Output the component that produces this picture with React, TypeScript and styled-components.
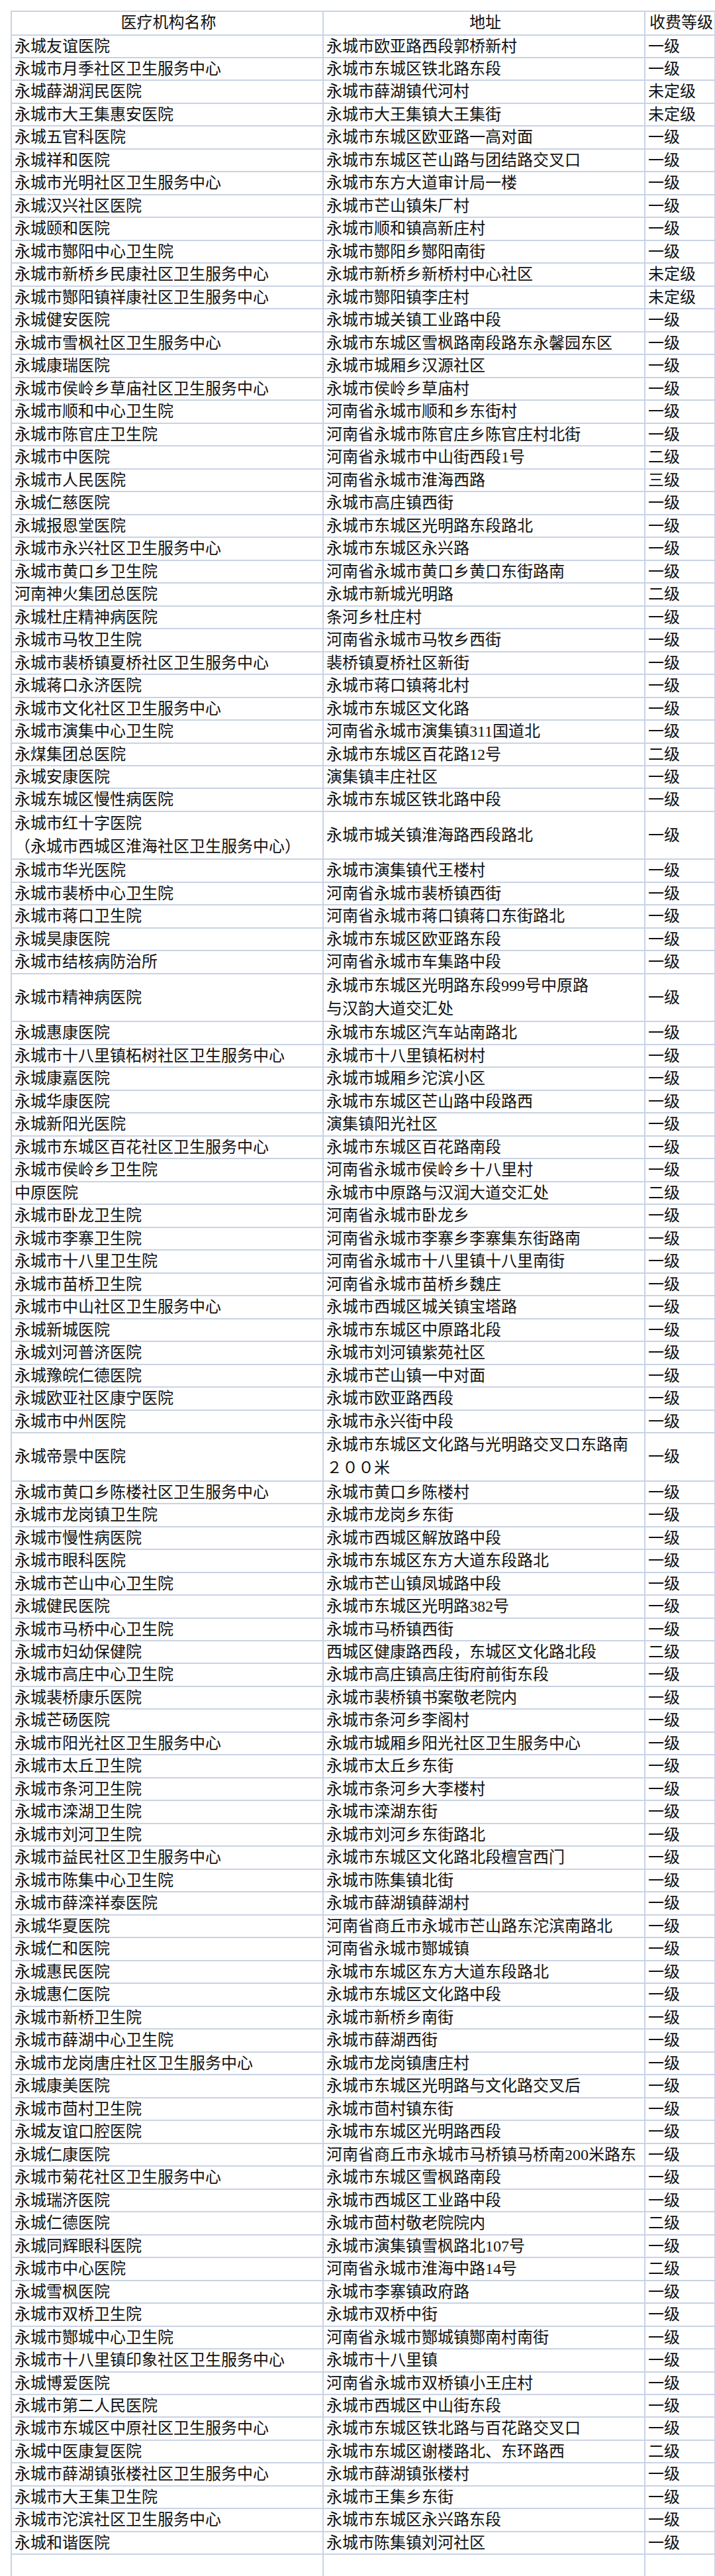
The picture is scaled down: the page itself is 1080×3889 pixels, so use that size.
import styled, { createGlobalStyle } from "styled-components";

const GlobalStyle = createGlobalStyle`
  html,
  body {
    margin: 0;
    padding: 0;
    background: #ffffff;
  }

  body {
    font-family: "Liberation Serif", "Noto Sans CJK SC", serif;
    color: #111111;
  }
`;

const Table = styled.table`
  margin: 16px 0 0 16px;
  width: 1063px;
  border-collapse: collapse;
  table-layout: fixed;
  font-size: 24px;
`;

const Col = styled.col<{ $w: number }>`
  width: ${({ $w }) => $w}px;
`;

const HeadCell = styled.th`
  border: 2px solid #c9d3e5;
  padding: 0 0 0 4px;
  line-height: 33.5px;
  font-weight: normal;
  text-align: center;
  white-space: nowrap;
  overflow: hidden;
`;

const Cell = styled.td<{ $tall?: boolean }>`
  border: 2px solid #c9d3e5;
  padding: 0 0 0 4px;
  line-height: ${({ $tall }) => ($tall ? "35.25px" : "32.48px")};
  text-align: left;
  vertical-align: middle;
  white-space: nowrap;
  overflow: hidden;
`;

type Clinic = [string, string, string];

// "\n" marks a hard line break inside a cell
const clinics: Clinic[] = [
  ["永城友谊医院", "永城市欧亚路西段郭桥新村", "一级"],
  ["永城市月季社区卫生服务中心", "永城市东城区铁北路东段", "一级"],
  ["永城薛湖润民医院", "永城市薛湖镇代河村", "未定级"],
  ["永城市大王集惠安医院", "永城市大王集镇大王集街", "未定级"],
  ["永城五官科医院", "永城市东城区欧亚路一高对面", "一级"],
  ["永城祥和医院", "永城市东城区芒山路与团结路交叉口", "一级"],
  ["永城市光明社区卫生服务中心", "永城市东方大道审计局一楼", "一级"],
  ["永城汉兴社区医院", "永城市芒山镇朱厂村", "一级"],
  ["永城颐和医院", "永城市顺和镇高新庄村", "一级"],
  ["永城市酂阳中心卫生院", "永城市酂阳乡酂阳南街", "一级"],
  ["永城市新桥乡民康社区卫生服务中心", "永城市新桥乡新桥村中心社区", "未定级"],
  ["永城市酂阳镇祥康社区卫生服务中心", "永城市酂阳镇李庄村", "未定级"],
  ["永城健安医院", "永城市城关镇工业路中段", "一级"],
  ["永城市雪枫社区卫生服务中心", "永城市东城区雪枫路南段路东永馨园东区", "一级"],
  ["永城康瑞医院", "永城市城厢乡汉源社区", "一级"],
  ["永城市侯岭乡草庙社区卫生服务中心", "永城市侯岭乡草庙村", "一级"],
  ["永城市顺和中心卫生院", "河南省永城市顺和乡东街村", "一级"],
  ["永城市陈官庄卫生院", "河南省永城市陈官庄乡陈官庄村北街", "一级"],
  ["永城市中医院", "河南省永城市中山街西段1号", "二级"],
  ["永城市人民医院", "河南省永城市淮海西路", "三级"],
  ["永城仁慈医院", "永城市高庄镇西街", "一级"],
  ["永城报恩堂医院", "永城市东城区光明路东段路北", "一级"],
  ["永城市永兴社区卫生服务中心", "永城市东城区永兴路", "一级"],
  ["永城市黄口乡卫生院", "河南省永城市黄口乡黄口东街路南", "一级"],
  ["河南神火集团总医院", "永城市新城光明路", "二级"],
  ["永城杜庄精神病医院", "条河乡杜庄村", "一级"],
  ["永城市马牧卫生院", "河南省永城市马牧乡西街", "一级"],
  ["永城市裴桥镇夏桥社区卫生服务中心", "裴桥镇夏桥社区新街", "一级"],
  ["永城蒋口永济医院", "永城市蒋口镇蒋北村", "一级"],
  ["永城市文化社区卫生服务中心", "永城市东城区文化路", "一级"],
  ["永城市演集中心卫生院", "河南省永城市演集镇311国道北", "一级"],
  ["永煤集团总医院", "永城市东城区百花路12号", "二级"],
  ["永城安康医院", "演集镇丰庄社区", "一级"],
  ["永城东城区慢性病医院", "永城市东城区铁北路中段", "一级"],
  ["永城市红十字医院\n（永城市西城区淮海社区卫生服务中心）", "永城市城关镇淮海路西段路北", "一级"],
  ["永城市华光医院", "永城市演集镇代王楼村", "一级"],
  ["永城市裴桥中心卫生院", "河南省永城市裴桥镇西街", "一级"],
  ["永城市蒋口卫生院", "河南省永城市蒋口镇蒋口东街路北", "一级"],
  ["永城昊康医院", "永城市东城区欧亚路东段", "一级"],
  ["永城市结核病防治所", "河南省永城市车集路中段", "一级"],
  ["永城市精神病医院", "永城市东城区光明路东段999号中原路\n与汉韵大道交汇处", "一级"],
  ["永城惠康医院", "永城市东城区汽车站南路北", "一级"],
  ["永城市十八里镇柘树社区卫生服务中心", "永城市十八里镇柘树村", "一级"],
  ["永城康嘉医院", "永城市城厢乡沱滨小区", "一级"],
  ["永城华康医院", "永城市东城区芒山路中段路西", "一级"],
  ["永城新阳光医院", "演集镇阳光社区", "一级"],
  ["永城市东城区百花社区卫生服务中心", "永城市东城区百花路南段", "一级"],
  ["永城市侯岭乡卫生院", "河南省永城市侯岭乡十八里村", "一级"],
  ["中原医院", "永城市中原路与汉润大道交汇处", "二级"],
  ["永城市卧龙卫生院", "河南省永城市卧龙乡", "一级"],
  ["永城市李寨卫生院", "河南省永城市李寨乡李寨集东街路南", "一级"],
  ["永城市十八里卫生院", "河南省永城市十八里镇十八里南街", "一级"],
  ["永城市苗桥卫生院", "河南省永城市苗桥乡魏庄", "一级"],
  ["永城市中山社区卫生服务中心", "永城市西城区城关镇宝塔路", "一级"],
  ["永城新城医院", "永城市东城区中原路北段", "一级"],
  ["永城刘河普济医院", "永城市刘河镇紫苑社区", "一级"],
  ["永城豫皖仁德医院", "永城市芒山镇一中对面", "一级"],
  ["永城欧亚社区康宁医院", "永城市欧亚路西段", "一级"],
  ["永城市中州医院", "永城市永兴街中段", "一级"],
  ["永城帝景中医院", "永城市东城区文化路与光明路交叉口东路南\n２００米", "一级"],
  ["永城市黄口乡陈楼社区卫生服务中心", "永城市黄口乡陈楼村", "一级"],
  ["永城市龙岗镇卫生院", "永城市龙岗乡东街", "一级"],
  ["永城市慢性病医院", "永城市西城区解放路中段", "一级"],
  ["永城市眼科医院", "永城市东城区东方大道东段路北", "一级"],
  ["永城市芒山中心卫生院", "永城市芒山镇凤城路中段", "一级"],
  ["永城健民医院", "永城市东城区光明路382号", "一级"],
  ["永城市马桥中心卫生院", "永城市马桥镇西街", "一级"],
  ["永城市妇幼保健院", "西城区健康路西段，东城区文化路北段", "二级"],
  ["永城市高庄中心卫生院", "永城市高庄镇高庄街府前街东段", "一级"],
  ["永城裴桥康乐医院", "永城市裴桥镇书案敬老院内", "一级"],
  ["永城芒砀医院", "永城市条河乡李阁村", "一级"],
  ["永城市阳光社区卫生服务中心", "永城市城厢乡阳光社区卫生服务中心", "一级"],
  ["永城市太丘卫生院", "永城市太丘乡东街", "一级"],
  ["永城市条河卫生院", "永城市条河乡大李楼村", "一级"],
  ["永城市滦湖卫生院", "永城市滦湖东街", "一级"],
  ["永城市刘河卫生院", "永城市刘河乡东街路北", "一级"],
  ["永城市益民社区卫生服务中心", "永城市东城区文化路北段檀宫西门", "一级"],
  ["永城市陈集中心卫生院", "永城市陈集镇北街", "一级"],
  ["永城市薛滦祥泰医院", "永城市薛湖镇薛湖村", "一级"],
  ["永城华夏医院", "河南省商丘市永城市芒山路东沱滨南路北", "一级"],
  ["永城仁和医院", "河南省永城市酂城镇", "一级"],
  ["永城惠民医院", "永城市东城区东方大道东段路北", "一级"],
  ["永城惠仁医院", "永城市东城区文化路中段", "一级"],
  ["永城市新桥卫生院", "永城市新桥乡南街", "一级"],
  ["永城市薛湖中心卫生院", "永城市薛湖西街", "一级"],
  ["永城市龙岗唐庄社区卫生服务中心", "永城市龙岗镇唐庄村", "一级"],
  ["永城康美医院", "永城市东城区光明路与文化路交叉后", "一级"],
  ["永城市茴村卫生院", "永城市茴村镇东街", "一级"],
  ["永城友谊口腔医院", "永城市东城区光明路西段", "一级"],
  ["永城仁康医院", "河南省商丘市永城市马桥镇马桥南200米路东", "一级"],
  ["永城市菊花社区卫生服务中心", "永城市东城区雪枫路南段", "一级"],
  ["永城瑞济医院", "永城市西城区工业路中段", "一级"],
  ["永城仁德医院", "永城市茴村敬老院院内", "二级"],
  ["永城同辉眼科医院", "永城市演集镇雪枫路北107号", "一级"],
  ["永城市中心医院", "河南省永城市淮海中路14号", "二级"],
  ["永城雪枫医院", "永城市李寨镇政府路", "一级"],
  ["永城市双桥卫生院", "永城市双桥中街", "一级"],
  ["永城市酂城中心卫生院", "河南省永城市酂城镇酂南村南街", "一级"],
  ["永城市十八里镇印象社区卫生服务中心", "永城市十八里镇", "一级"],
  ["永城博爱医院", "河南省永城市双桥镇小王庄村", "一级"],
  ["永城市第二人民医院", "永城市西城区中山街东段", "一级"],
  ["永城市东城区中原社区卫生服务中心", "永城市东城区铁北路与百花路交叉口", "一级"],
  ["永城中医康复医院", "永城市东城区谢楼路北、东环路西", "二级"],
  ["永城市薛湖镇张楼社区卫生服务中心", "永城市薛湖镇张楼村", "一级"],
  ["永城市大王集卫生院", "永城市王集乡东街", "一级"],
  ["永城市沱滨社区卫生服务中心", "永城市东城区永兴路东段", "一级"],
  ["永城和谐医院", "永城市陈集镇刘河社区", "一级"],
];

function Lines({ text }: { text: string }) {
  const parts = text.split("\n");
  return (
    <>
      {parts.map((part, i) => (
        <span key={i}>
          {i > 0 && <br />}
          {part}
        </span>
      ))}
    </>
  );
}

export default function App() {
  return (
    <>
      <GlobalStyle />
      <Table>
        <colgroup>
          <Col $w={471} />
          <Col $w={486} />
          <Col $w={106} />
        </colgroup>
        <thead>
          <tr>
            <HeadCell>医疗机构名称</HeadCell>
            <HeadCell>地址</HeadCell>
            <HeadCell>收费等级</HeadCell>
          </tr>
        </thead>
        <tbody>
          {clinics.map(([name, address, grade]) => {
            const tall = name.includes("\n") || address.includes("\n");
            return (
              <tr key={name}>
                <Cell $tall={tall}>
                  <Lines text={name} />
                </Cell>
                <Cell $tall={tall}>
                  <Lines text={address} />
                </Cell>
                <Cell $tall={tall}>{grade}</Cell>
              </tr>
            );
          })}
          <tr>
            <Cell>&nbsp;</Cell>
            <Cell>&nbsp;</Cell>
            <Cell>&nbsp;</Cell>
          </tr>
        </tbody>
      </Table>
    </>
  );
}
